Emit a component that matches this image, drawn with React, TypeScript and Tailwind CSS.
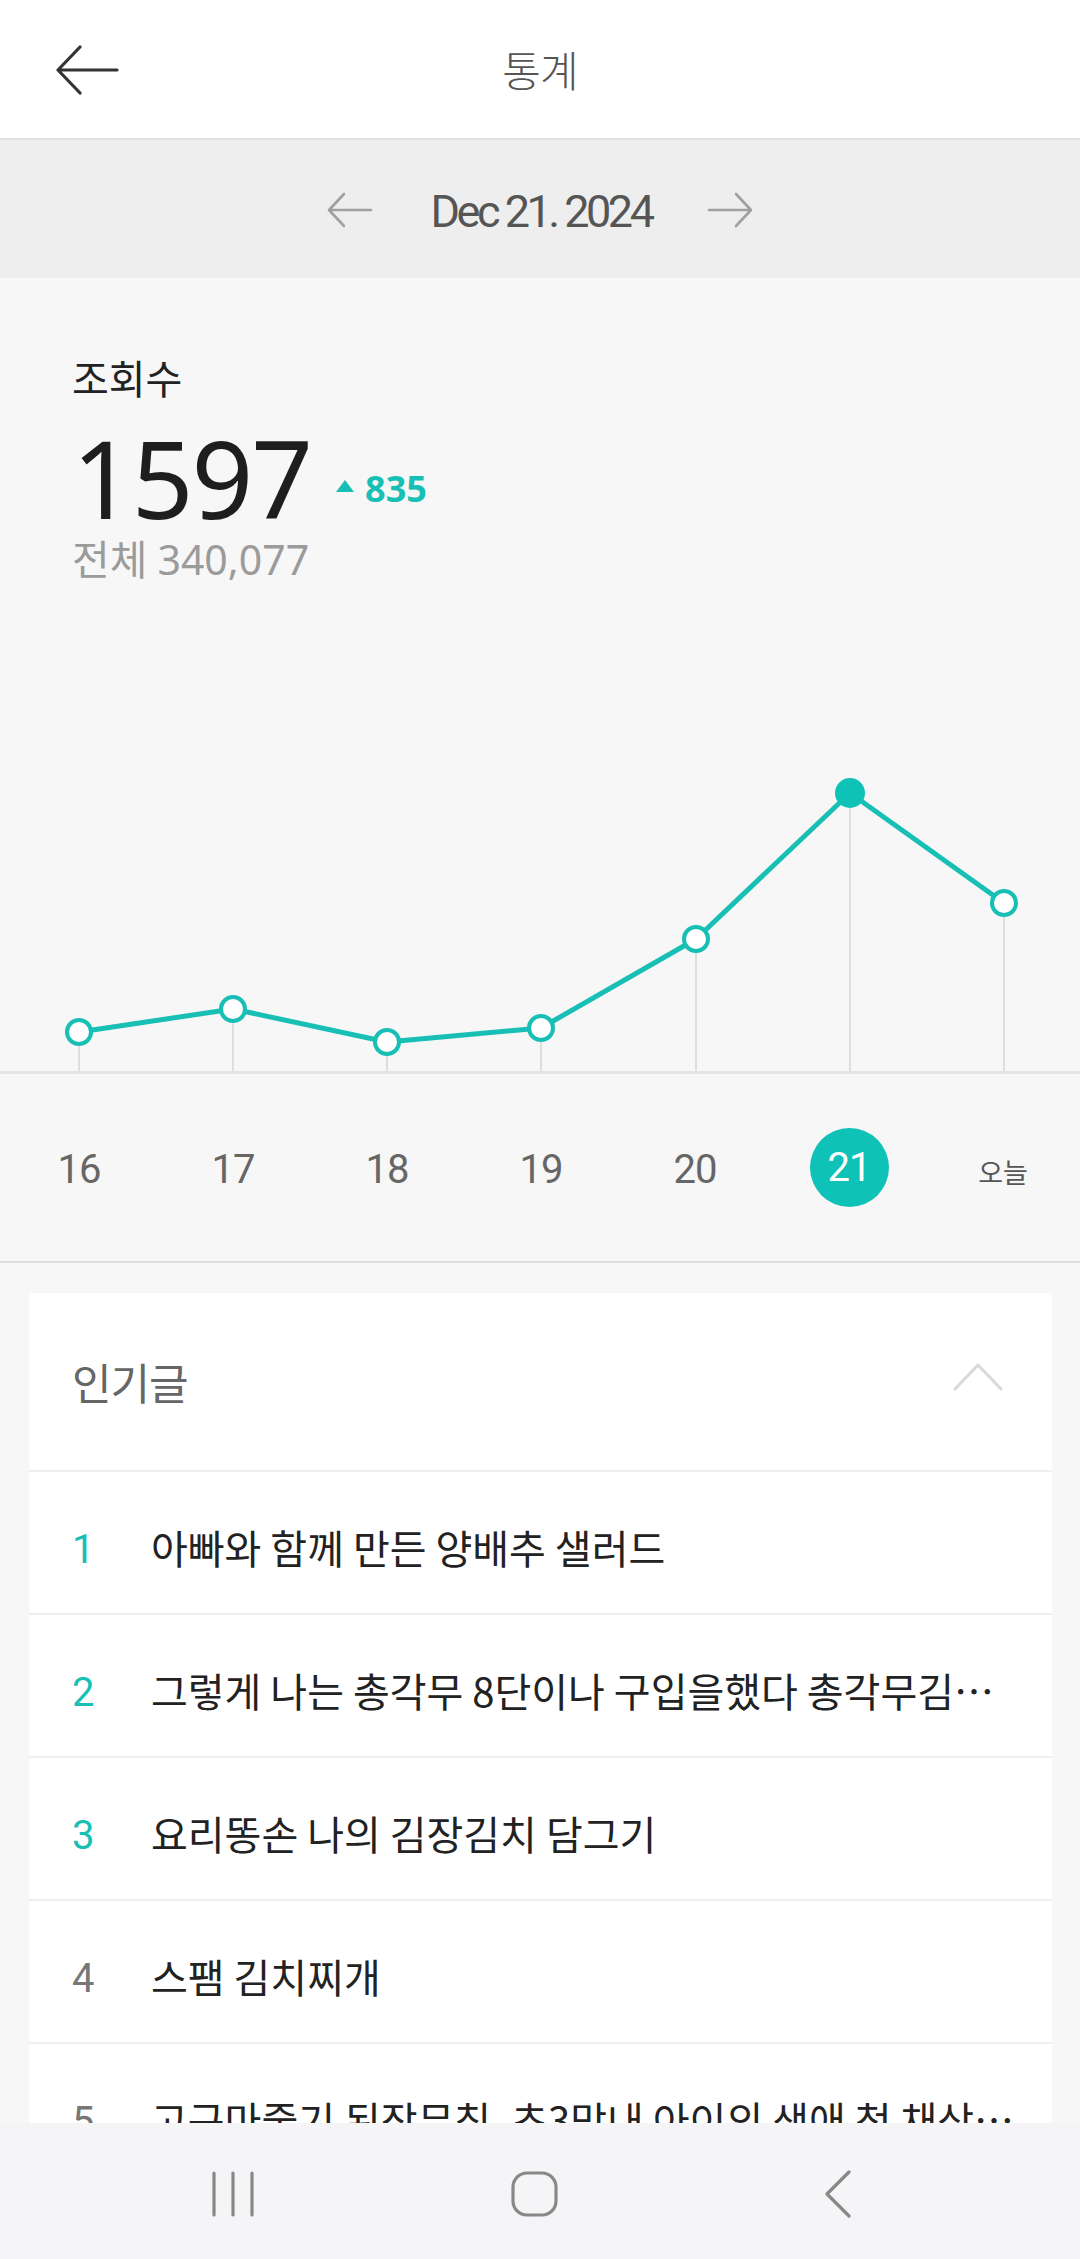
import React from "react";

const KR = { fontFamily: '"Noto Sans CJK KR", "Noto Sans", sans-serif' };
const NUM = { fontFamily: 'Roboto, "Noto Sans", sans-serif' };
const NS = { fontFamily: '"Noto Sans", sans-serif' };

const pts: [number, number][] = [
  [79, 1032],
  [233, 1009],
  [387, 1042],
  [541, 1028],
  [696, 939],
  [850, 793],
  [1004, 903],
];

const days = ["16", "17", "18", "19", "20", "21", "오늘"];

const posts = [
  "아빠와 함께 만든 양배추 샐러드",
  "그렇게 나는 총각무 8단이나 구입을했다 총각무김치 담그기",
  "요리똥손 나의 김장김치 담그기",
  "스팸 김치찌개",
  "고구마줄기 된장무침, 초3막내 아이의 생애 첫 채상 차림",
];

function Chart() {
  const d = pts.map((p, i) => `${i === 0 ? "M" : "L"}${p[0]} ${p[1]}`).join(" ");
  return (
    <svg width="1080" height="454" viewBox="0 620 1080 454" className="block">
      {pts.map((p, i) => (
        <line key={i} x1={p[0]} y1={p[1]} x2={p[0]} y2={1072} stroke="#dedede" strokeWidth="2" />
      ))}
      <line x1="0" y1="1072.5" x2="1080" y2="1072.5" stroke="#e4e4e4" strokeWidth="3" />
      <path d={d} fill="none" stroke="#17bfb5" strokeWidth="5" strokeLinejoin="round" />
      {pts.map((p, i) =>
        i === 5 ? (
          <circle key={i} cx={p[0]} cy={p[1]} r="15" fill="#0fc2b7" />
        ) : (
          <circle key={i} cx={p[0]} cy={p[1]} r="12" fill="#ffffff" stroke="#17bfb5" strokeWidth="4" />
        )
      )}
    </svg>
  );
}

export default function App() {
  return (
    <div className="w-[1080px] h-[2259px] bg-[#f7f7f7] flex flex-col overflow-hidden">
      <div className="h-[2123px] overflow-hidden flex flex-col">
        {/* Header */}
        <div className="h-[140px] shrink-0 bg-white border-b-2 border-[#e2e2e2] relative flex items-center justify-center">
          <svg className="absolute left-[55px] top-[45px]" width="64" height="50" viewBox="0 0 64 50" fill="none">
            <path d="M3 25 H62 M25 2 L3 25 L25 48" stroke="#333" strokeWidth="3.2" strokeLinecap="round" strokeLinejoin="round" />
          </svg>
          <span className="text-[42px] font-light text-[#555] leading-none tracking-[-1px]" style={KR}>
            통계
          </span>
        </div>

        {/* Date bar */}
        <div className="h-[138px] shrink-0 bg-[#eeeeee] flex items-center justify-center">
          <svg width="46" height="36" viewBox="0 0 46 36" fill="none" className="mr-[58px] mt-[2px]">
            <path d="M2 18 H44 M17 2 L2 18 L17 34" stroke="#a0a0a0" strokeWidth="2.6" strokeLinecap="round" strokeLinejoin="round" />
          </svg>
          <span className="text-[45px] text-[#555] leading-none tracking-[-3.5px] mt-[4px]" style={NUM}>
            Dec 21. 2024
          </span>
          <svg width="46" height="36" viewBox="0 0 46 36" fill="none" className="ml-[56px] mt-[2px]">
            <path d="M2 18 H44 M29 2 L44 18 L29 34" stroke="#a0a0a0" strokeWidth="2.6" strokeLinecap="round" strokeLinejoin="round" />
          </svg>
        </div>

        {/* Stats */}
        <div className="shrink-0 bg-[#f7f7f7]">
          <div className="h-[342px] pl-[72px] pt-[74px] flex flex-col">
            <div className="h-[50px] text-[40px] leading-[50px] text-[#222]" style={KR}>
              조회수
            </div>
            <div className="flex items-end mt-[26px]">
              <span className="text-[108px] leading-[100px] text-[#1e1e1e] tracking-[-2px]" style={NS}>
                1597
              </span>
              <span className="ml-[24px] mb-[21px] flex items-end text-[#17bfb5]">
                <svg width="20" height="14" viewBox="0 0 20 14" className="mb-[14px] mr-[10px]">
                  <path d="M10 1 L19 13 H1 Z" fill="#17bfb5" />
                </svg>
                <span className="text-[36px] font-bold leading-[36px]" style={NS}>
                  835
                </span>
              </span>
            </div>
            <div className="text-[41px] leading-[48px] text-[#9b9b9b] mt-[5px] flex items-baseline" style={KR}>
              <span>전체</span>
              <span className="ml-[10px]" style={NS}>340,077</span>
            </div>
          </div>
          <Chart />
          <div className="h-[189px] border-b-2 border-[#dedede] grid grid-cols-7 pl-[2px] items-center">
            {days.map((d, i) => (
              <div key={i} className="flex items-center justify-center">
                {i === 5 ? (
                  <div className="w-[79px] h-[79px] rounded-full bg-[#0fc2b7] flex items-center justify-center text-white text-[40px] tracking-[-1px]" style={NUM}>
                    {d}
                  </div>
                ) : i === 6 ? (
                  <span className="text-[27px] text-[#555] mt-[10px]" style={KR}>
                    {d}
                  </span>
                ) : (
                  <span className="text-[40px] text-[#666] tracking-[-1px] mt-[4px]" style={NUM}>
                    {d}
                  </span>
                )}
              </div>
            ))}
          </div>
        </div>

        {/* Popular posts card */}
        <div className="mt-[30px] ml-[29px] mr-[28px] bg-white shrink-0">
          <div className="h-[179px] border-b-2 border-[#eeeeee] flex items-center justify-between pl-[43px] pr-[49px]">
            <span className="text-[43px] text-[#666] tracking-[-1px]" style={KR}>
              인기글
            </span>
            <svg width="50" height="28" viewBox="0 0 50 28" fill="none" className="mt-[-10px]">
              <path d="M2 26 L25 2 L48 26" stroke="#d9d9d9" strokeWidth="3" strokeLinecap="round" strokeLinejoin="round" />
            </svg>
          </div>
          {posts.map((p, i) => (
            <div key={i} className="h-[143px] border-b-2 border-[#eeeeee] flex items-center pl-[43px] pr-[30px]">
              <span
                className={`w-[79px] shrink-0 text-[40px] leading-[48px] mt-[14px] ${i < 3 ? "text-[#17bfb5]" : "text-[#777]"}`}
                style={NUM}
              >
                {i + 1}
              </span>
              <span className="truncate text-[40px] leading-[56px] text-[#222] mt-[8px]" style={KR}>
                {p}
              </span>
            </div>
          ))}
        </div>
      </div>

      {/* Navigation bar */}
      <div className="h-[136px] shrink-0 bg-[#f5f5f7] relative">
        <svg className="absolute left-[210px] top-[48px]" width="46" height="46" viewBox="0 0 46 46" fill="none">
          <path d="M4 2 V44 M23 2 V44 M42 2 V44" stroke="#888" strokeWidth="3.2" strokeLinecap="round" />
        </svg>
        <svg className="absolute left-[511px] top-[48px]" width="48" height="46" viewBox="0 0 48 46" fill="none">
          <rect x="2" y="2" width="43" height="42" rx="14" stroke="#888" strokeWidth="3.2" />
        </svg>
        <svg className="absolute left-[823px] top-[47px]" width="30" height="48" viewBox="0 0 30 48" fill="none">
          <path d="M26 2 L4 24 L26 46" stroke="#888" strokeWidth="3.2" strokeLinecap="round" strokeLinejoin="round" />
        </svg>
      </div>
    </div>
  );
}
